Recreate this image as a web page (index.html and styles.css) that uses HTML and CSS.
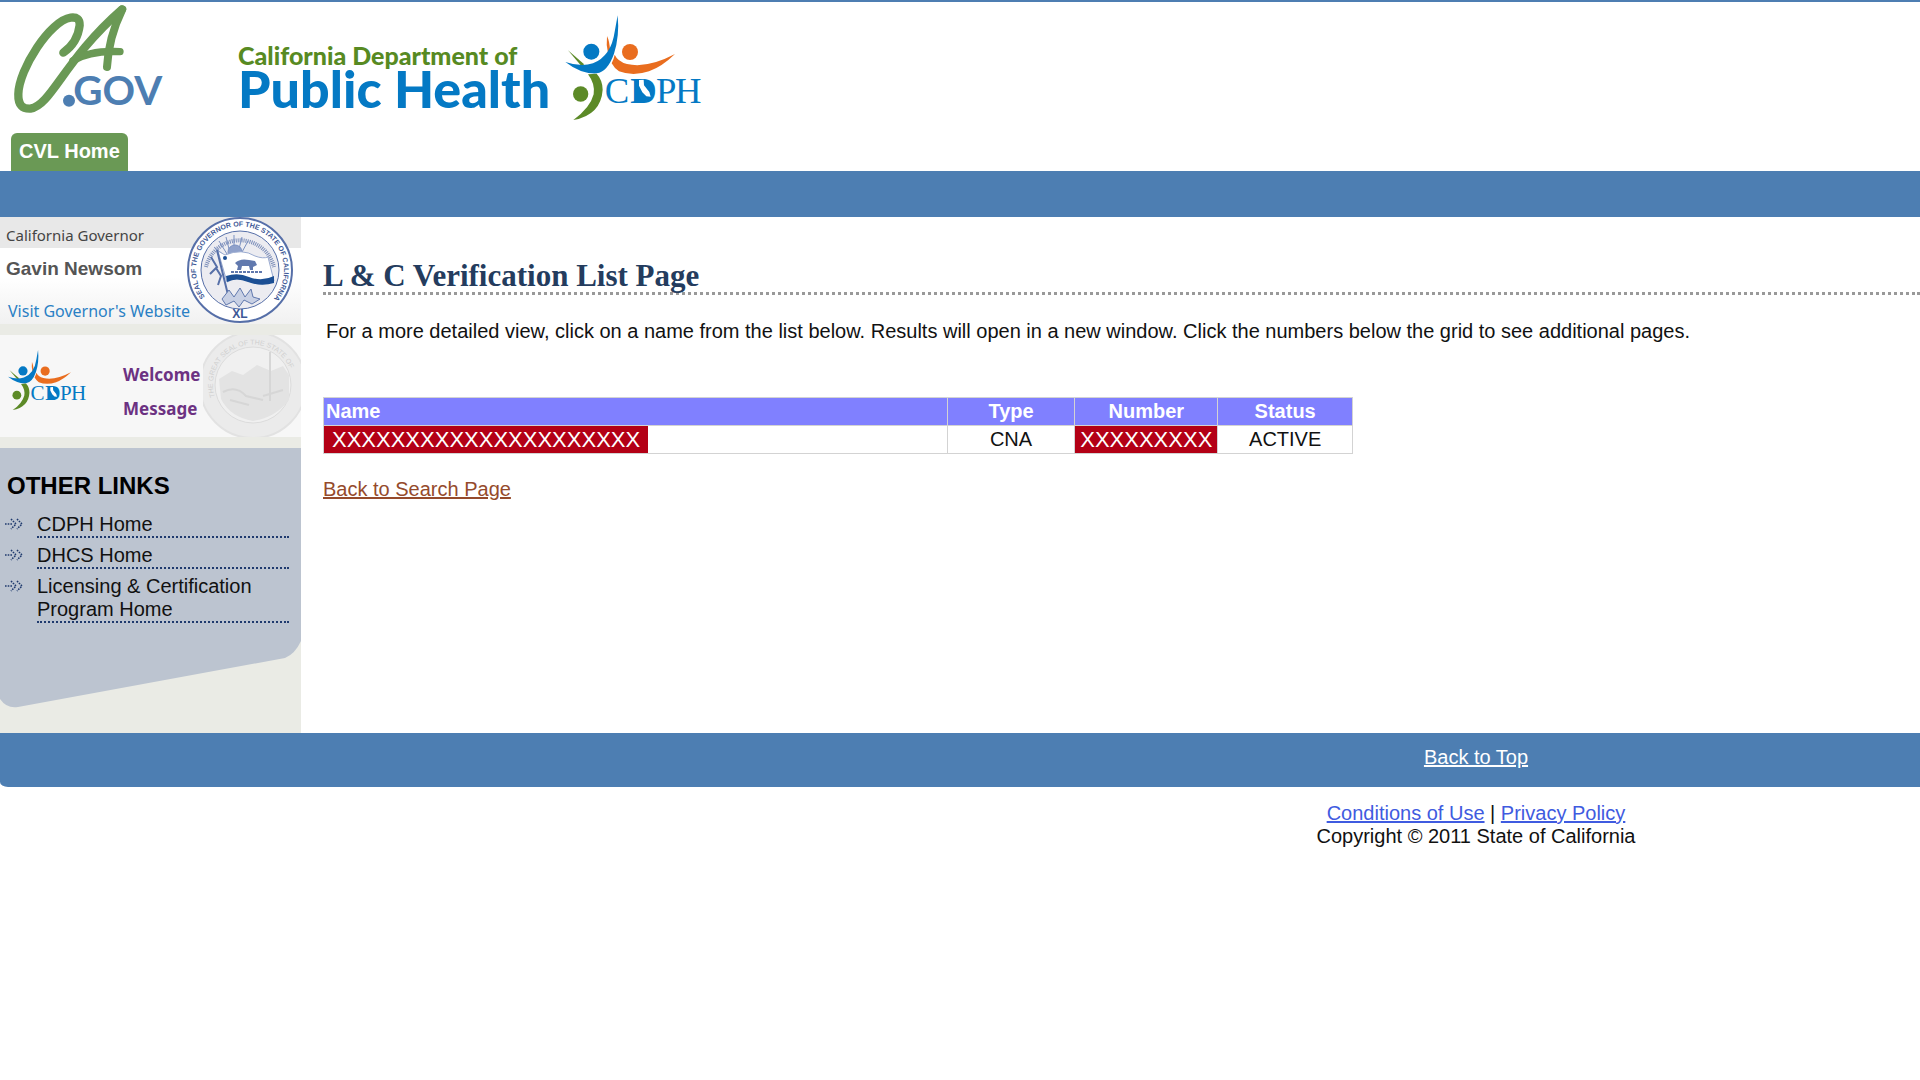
FILE: index.html
```html
<!DOCTYPE html>
<html lang="en">
  <head>
    <meta charset="UTF-8" />
    <meta name="viewport" content="width=device-width, initial-scale=1.0" />
    <title>L &amp; C Verification List Page</title>
    <link rel="stylesheet" href="styles.css">
  </head>
  <body>
    <!-- Shared CDPH logo -->
    <svg class="symbols" width="0" height="0" aria-hidden="true">
      <symbol id="cdph" viewBox="0 0 450 345">
        <path d="M24 121 L69 160 L75 170 L64 168 Z" fill="#5c8a27" />
        <path d="M141 78 Q148 92 150 118 L144 129 Q138 105 141 78 Z" fill="#e96d1f" />
        <path d="M164 134 Q173 154 201 162 Q262 176 345 132 Q306 170 267 184 Q219 200 177 184 Q163 175 155 160 Q162 146 164 134 Z" fill="#e96d1f" />
        <path d="M173 16 Q179 79 162 131 Q143 185 110 190 Q64 193 16 156 Q63 172 99 160 Q154 137 164 65 Z" fill="#0479c4" />
        <path d="M84 193 L110 191 Q128 211 128 239 Q123 315 40 330 Q91 293 101 253 Q106 222 84 193 Z" fill="#5c8a27" />
        <circle cx="94" cy="125" r="24" fill="#0479c4" />
        <circle cx="210" cy="126" r="24" fill="#e96d1f" />
        <circle cx="62" cy="252" r="23" fill="#5c8a27" />
        <text class="cdph-letters" x="134" y="278">C</text>
        <path d="M224 207 H248 Q278 210 280 241 Q278 273 246 275 H224 Z" fill="#0479c4" />
        <text class="cdph-letters cdph-bold" x="211" y="278">D</text>
        <path d="M237 210 L251 209 L252 226 L268 246 L272 260 L259 259 L247 247 L237 227 Z" fill="#fff" />
        <text class="cdph-letters" x="288" y="278">P</text>
        <text class="cdph-letters" x="345" y="278">H</text>
      </symbol>
      <symbol id="arrows" viewBox="0 0 18 12">
        <path d="M0 6 H8 M6 1 L11 6 L6 11 M12 1 L17 6 L12 11" fill="none" stroke="#1f3a6e" stroke-width="1.5" stroke-dasharray="1.6 1.1" />
      </symbol>
    </svg>

    <header class="header" id="top">
      <div class="branding">
        <svg class="ca-logo" viewBox="33 6 465 345" role="img" aria-label="CA.GOV">
          <g fill="none" stroke="#6a9955" stroke-linecap="round" stroke-linejoin="round">
            <path d="M190 158 Q233 128 239 76 Q240 49 212 53 C150 62 57 207 55 282 C54 316 68 327 91 326 C155 315 191 181 366 28" stroke-width="25" />
            <path d="M367 28 Q326 112 321 201" stroke-width="24" />
            <path d="M219 182 Q269 151 360 155" stroke-width="22" />
          </g>
          <circle cx="207" cy="302" r="18" fill="#4d7eb2" />
          <text class="gov" x="220" y="315">GOV</text>
        </svg>
        <div class="wordmark">
          <span class="wordmark-top">California Department of</span>
          <span class="wordmark-bottom">Public Health</span>
        </div>
        <svg class="cdph-logo" role="img" aria-label="CDPH"><use href="#cdph" /></svg>
      </div>
      <nav>
        <a class="tab" href="#">CVL Home</a>
      </nav>
    </header>
    <div class="bar"></div>

    <div class="content">
      <aside class="sidebar">
        <div class="governor">
          <div class="governor-text">
            <span class="governor-title">California Governor</span>
            <strong class="governor-name">Gavin Newsom</strong>
            <a class="governor-link" href="#">Visit Governor's Website</a>
          </div>
          <svg class="seal" viewBox="0 0 106 106" role="img" aria-label="Seal of the Governor of the State of California">
            <circle cx="53" cy="53" r="52" fill="#fff" stroke="#566fa8" stroke-width="2" />
            <circle cx="53" cy="53" r="39" fill="#ececf1" stroke="#566fa8" stroke-width="1" />
            <path id="ring" d="M18 80 A44 44 0 1 1 88 80" fill="none" />
            <text class="seal-text"><textPath href="#ring">SEAL OF THE GOVERNOR OF THE STATE OF CALIFORNIA</textPath></text>
            <path d="M19 50 A35 35 0 0 1 87 50" fill="none" stroke="#7c8eb9" stroke-width="4" stroke-dasharray="1 1" />
            <g stroke="#7b91c1" stroke-width="1">
              <path d="M47 36 V18 M43 36 L39 20 M40 37 L32 24 M38 39 L27 30 M51 36 L55 20 M54 37 L61 24" />
              <circle cx="48" cy="35" r="7" fill="#8fa1cb" />
            </g>
            <path d="M31 34 L38 38 Q55 31 68 39 Q76 42 81 40 L87 64 Q75 70 61 64 Q50 59 40 65 Z" fill="#fff" stroke="#9aabd0" />
            <path d="M39 59 Q51 55 62 60 Q75 65 87 59 L87 66 Q74 70 61 65 Q49 60 40 65 Z" fill="#1c4f94" />
            <path d="M48 46 Q53 41 62 43 L68 44 L70 48 L66 50 L66 53 L63 53 L62 49 L55 49 L54 53 L50 53 L51 49 Z" fill="#6179ae" />
            <path d="M44 55 H75" stroke="#6179ae" stroke-width="2" stroke-dasharray="3 1" />
            <path d="M30 33 L43 86 M24 40 L30 50 L23 57 M29 51 L34 59 L31 68" fill="none" stroke="#566fa8" stroke-width="2" />
            <circle cx="38" cy="41" r="2" fill="#1c4f94" />
            <path d="M35 82 L42 73 L47 80 L53 71 L58 80 L64 72 L66 80 L73 82 L65 87 L57 83 L52 90 L47 84 L39 88 Z" fill="#c8d0e4" stroke="#6179ae" />
            <text class="seal-roman" x="53" y="101">XL</text>
          </svg>
        </div>

        <a class="welcome" href="#">
          <svg class="welcome-logo" aria-hidden="true"><use href="#cdph" /></svg>
          <span class="welcome-text">Welcome<br>Message</span>
          <svg class="state-seal" viewBox="0 0 98 102" aria-hidden="true">
            <circle cx="50" cy="50" r="53" fill="#ebebeb" stroke="#e2e2e2" stroke-width="2" />
            <circle cx="50" cy="50" r="38" fill="#f0f0f0" stroke="#dcdcdc" />
            <path id="state-ring" d="M12 62 A40 40 0 1 1 88 62" fill="none" />
            <text class="state-text"><textPath href="#state-ring">THE GREAT SEAL OF THE STATE OF</textPath></text>
            <path d="M16 44 L29 36 L40 40 L54 30 L68 36 L80 31 L86 40 V65 Q72 83 50 86 Q27 82 18 64 Z" fill="#e3e3e3" />
            <path d="M20 57 Q33 50 43 61 L60 65 M67 17 V66 M60 61 L80 55 M27 65 L46 70" fill="none" stroke="#d6d6d6" stroke-width="2" />
          </svg>
        </a>

        <div class="links">
          <h2>OTHER LINKS</h2>
          <ul>
            <li><svg class="arrows" aria-hidden="true"><use href="#arrows" /></svg><a href="#">CDPH Home</a></li>
            <li><svg class="arrows" aria-hidden="true"><use href="#arrows" /></svg><a href="#">DHCS Home</a></li>
            <li><svg class="arrows" aria-hidden="true"><use href="#arrows" /></svg><a href="#">Licensing &amp; Certification Program Home</a></li>
          </ul>
        </div>
        <svg class="links-end" viewBox="0 0 301 67" preserveAspectRatio="none" aria-hidden="true">
          <path d="M0 0 H301 Q295 13 285 17 L18 66 Q7 68 0 58 Z" fill="#bcc4d0" />
        </svg>
      </aside>

      <main class="main">
        <h1>L &amp; C Verification List Page</h1>
        <p>For a more detailed view, click on a name from the list below. Results will open in a new window. Click the numbers below the grid to see additional pages.</p>
        <table>
          <thead>
            <tr>
              <th class="col-name">Name</th>
              <th class="col-type">Type</th>
              <th class="col-number">Number</th>
              <th class="col-status">Status</th>
            </tr>
          </thead>
          <tbody>
            <tr>
              <td class="col-name"><span class="redacted redacted-name">XXXXXXXXXXXXXXXXXXXXX</span></td>
              <td>CNA</td>
              <td><span class="redacted">XXXXXXXXX</span></td>
              <td>ACTIVE</td>
            </tr>
          </tbody>
        </table>
        <a class="back" href="#">Back to Search Page</a>
      </main>
    </div>

    <footer>
      <div class="footer-bar">
        <a href="#top">Back to Top</a>
      </div>
      <div class="footer-text">
        <a href="#">Conditions of Use</a> | <a href="#">Privacy Policy</a><br>
        Copyright © 2011 State of California
      </div>
    </footer>
  </body>
</html>
```
FILE: styles.css
```css
body {
  background-color: #fff;
  color: #111;
  font-family: "Liberation Sans", Arial, sans-serif;
  font-size: 20px;
  line-height: 23px;
  margin: 0;
}
.symbols {
  position: absolute;
}
.header {
  border-top: 2px solid #4d7eb2;
}
.branding {
  align-items: flex-start;
  display: flex;
  height: 131px;
  padding-left: 11px;
}
.ca-logo {
  height: 115px;
  width: 155px;
}
.gov {
  fill: #4d7eb2;
  font-family: Lato, sans-serif;
  font-size: 121px;
  font-weight: bold;
}
.wordmark {
  display: flex;
  flex-direction: column;
  font-family: Lato, sans-serif;
  font-weight: 900;
  margin-left: 72px;
  padding-top: 38px;
  white-space: nowrap;
  width: 322px;
}
.wordmark-top {
  color: #578a22;
  font-size: 25px;
  line-height: 30px;
}
.wordmark-bottom {
  color: #0479c4;
  font-size: 52px;
  line-height: 36px;
}
.cdph-logo {
  height: 115px;
  margin-top: 8px;
  width: 150px;
}
.cdph-letters {
  fill: #0479c4;
  font-family: "Liberation Serif", serif;
  font-size: 110px;
}
.cdph-bold {
  font-weight: bold;
}
nav {
  display: flex;
  padding-left: 11px;
}
.tab {
  background-color: #6a9955;
  border-radius: 6px 6px 0 0;
  color: #fff;
  font-weight: bold;
  padding: 7px 8px 8px;
  text-decoration: none;
}
.bar {
  background-color: #4d7eb2;
  height: 46px;
}
.content {
  display: grid;
  grid-template-columns: 301px 1fr;
}

/* Sidebar */
.sidebar {
  background-color: #eaebe5;
  display: flex;
  flex-direction: column;
  padding-bottom: 25px;
}
.governor {
  background: linear-gradient(#e8e8e8 0 31px, #fff 31px 60px, #f1f1f1);
  display: flex;
  height: 107px;
  margin-bottom: 11px;
}
.governor-text {
  display: flex;
  flex-direction: column;
  font-family: "Noto Sans", sans-serif;
  padding: 6px 0 0 6px;
  white-space: nowrap;
  width: 181px;
}
.governor-title {
  color: #444;
  font-size: 15px;
  line-height: 24px;
}
.governor-name {
  color: #555;
  font-family: "Liberation Sans", Arial, sans-serif;
  font-size: 19px;
  line-height: 44px;
}
.governor-link {
  color: #2a80c4;
  font-size: 16px;
  line-height: 40px;
  padding-left: 2px;
  text-decoration: none;
}
.seal {
  height: 106px;
  width: 106px;
}
.seal-text {
  fill: #3d5896;
  font-family: "Liberation Sans", sans-serif;
  font-size: 7px;
  font-weight: bold;
}
.seal-roman {
  fill: #3d5896;
  font-family: "Liberation Sans", sans-serif;
  font-size: 12px;
  font-weight: bold;
  text-anchor: middle;
}
.welcome {
  background-color: #f7f7f7;
  display: flex;
  height: 102px;
  margin-bottom: 11px;
  text-decoration: none;
}
.welcome-logo {
  height: 68px;
  margin: 11px 0 0 5px;
  width: 86px;
}
.welcome-text {
  color: #6c3282;
  font-family: "Noto Sans", sans-serif;
  font-size: 17px;
  font-weight: bold;
  line-height: 34px;
  padding: 23px 0 0 32px;
  width: 80px;
}
.state-seal {
  height: 102px;
  width: 98px;
}
.state-text {
  fill: #d0d0d0;
  font-size: 7px;
}
.links {
  background-color: #bcc4d0;
  padding: 24px 12px 18px 7px;
}
.links h2 {
  color: #000;
  font-size: 24px;
  line-height: 28px;
  margin: 0 0 13px;
}
.links ul {
  list-style: none;
  margin: 0;
  padding: 0;
}
.links li {
  display: flex;
  margin-bottom: 6px;
}
.links li:last-child {
  margin-bottom: 0;
}
.links a {
  border-bottom: 2px dotted #1f3a6e;
  color: #111;
  flex: 1;
  text-decoration: none;
}
.arrows {
  height: 12px;
  margin: 5px 14px 0 -2px;
  width: 18px;
}
.links-end {
  height: 67px;
  width: 100%;
}

/* Main column */
.main {
  padding: 42px 0 0 22px;
}
.main h1 {
  border-bottom: 3px dotted #999;
  color: #243c5e;
  font-family: Georgia, "Liberation Serif", serif;
  font-size: 31px;
  line-height: 33px;
  margin: 0 0 25px;
}
.main p {
  margin: 0 0 54px;
  padding-left: 3px;
}
table {
  border-collapse: collapse;
  margin-bottom: 24px;
  table-layout: fixed;
  width: 64.5%;
}
th,
td {
  border: 1px solid #d3d3d3;
  height: 27px;
  padding: 0;
  text-align: center;
}
th {
  background-color: #8080ff;
  color: #fff;
}
.col-name {
  text-align: left;
}
th.col-name {
  padding-left: 2px;
}
.col-type {
  width: 12.3%;
}
.col-number {
  width: 13.8%;
}
.col-status {
  width: 13%;
}
.redacted {
  background-color: #b30016;
  color: #fff;
  display: block;
  font-size: 22px;
  line-height: 27px;
}
.redacted-name {
  padding: 0 8px;
  width: max-content;
}
.back {
  color: #954a2b;
}

footer {
  color: #111;
}
.footer-bar {
  background-color: #4d7eb2;
  border-bottom-left-radius: 8px 5px;
  padding: 13px 0 18px 53.75%;
  text-align: center;
}
.footer-bar a {
  color: #fff;
}
.footer-text {
  padding: 15px 0 0 53.75%;
  text-align: center;
}
.footer-text a {
  color: #3f5be0;
}
```
